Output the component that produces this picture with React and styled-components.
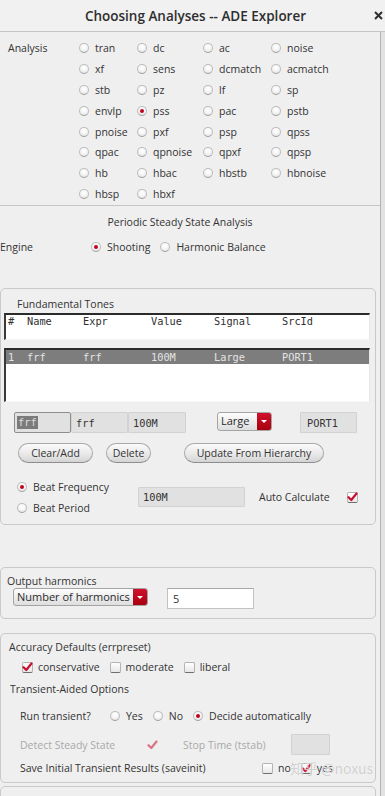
import React from 'react';
import styled, { createGlobalStyle } from 'styled-components';

const GlobalStyle = createGlobalStyle`
  html, body {
    margin: 0;
    padding: 0;
    background: #efefef;
  }
  body {
    font-family: "Open Sans", "Noto Sans", sans-serif;
    font-size: 10.5px;
    color: #333333;
  }
`;

const analyses = [
  ['tran', 'dc', 'ac', 'noise'],
  ['xf', 'sens', 'dcmatch', 'acmatch'],
  ['stb', 'pz', 'lf', 'sp'],
  ['envlp', 'pss', 'pac', 'pstb'],
  ['pnoise', 'pxf', 'psp', 'qpss'],
  ['qpac', 'qpnoise', 'qpxf', 'qpsp'],
  ['hb', 'hbac', 'hbstb', 'hbnoise'],
  ['hbsp', 'hbxf'],
];

const tones = ['#', 'Name', 'Expr', 'Value', 'Signal', 'SrcId'];
const toneRow = ['1', 'frf', 'frf', '100M', 'Large', 'PORT1'];

const Radio = ({ on, dim, children }) => (
  <Option $dim={dim}>
    <RadioCircle $on={on} />
    {children}
  </Option>
);

const Check = ({ on, dim, children }) => (
  <Option $dim={dim} $gap={5}>
    <CheckBox $dim={dim}>
      {on && (
        <svg width="11" height="10" viewBox="0 0 11 10">
          <path d="M1.5 5.2 L4.3 8 L9.5 1.5" fill="none" stroke="#c8102e" strokeWidth="2.2" strokeLinecap="round" strokeLinejoin="round" />
        </svg>
      )}
    </CheckBox>
    {children}
  </Option>
);

const Combo = ({ width, children }) => (
  <ComboBox $width={width}>
    <ComboText>{children}</ComboText>
    <ComboArrow />
  </ComboBox>
);

const App = () => {
  return (
    <Page>
      <GlobalStyle />
      <TitleBar>
        <span />
        <Title>Choosing Analyses -- ADE Explorer</Title>
        <Close>
          <svg width="9" height="9" viewBox="0 0 9 9">
            <path d="M1 1 L8 8 M8 1 L1 8" stroke="#2f2f2f" strokeWidth="2" />
          </svg>
        </Close>
      </TitleBar>

      <Frame>
        <Content>
          <AnalysisGrid>
            {analyses.map((row, r) => (
              <React.Fragment key={r}>
                <SideLabel>{r === 0 ? 'Analysis' : ''}</SideLabel>
                {row.map((name) => (
                  <Radio key={name} on={name === 'pss'}>{name}</Radio>
                ))}
                {row.length < 4 && <span style={{ gridColumn: 'span ' + (4 - row.length) }} />}
              </React.Fragment>
            ))}
          </AnalysisGrid>

          <Rule />

          <SubTitle>Periodic Steady State Analysis</SubTitle>
          <EngineRow>
            <span>Engine</span>
            <Options>
              <Radio on>Shooting</Radio>
              <Radio>Harmonic Balance</Radio>
            </Options>
          </EngineRow>

          <GroupBox $top={32}>
            <BoxTitle $left={16} $top={8}>Fundamental Tones</BoxTitle>
            <SunkenTable $height={27} $top={2}>
              <TableRow>
                {tones.map((t) => <span key={t}>{t}</span>)}
              </TableRow>
            </SunkenTable>
            <SunkenTable $height={54} $top={8}>
              <TableRow $selected>
                {toneRow.map((t, i) => <span key={i}>{t}</span>)}
              </TableRow>
            </SunkenTable>

            <FieldRow>
              <Field $width={57} $focus><Selected>frf</Selected></Field>
              <Field $width={57}>frf</Field>
              <Field $width={58}>100M</Field>
              <ComboSlot $left={31}>
                <Combo width={55}>Large</Combo>
              </ComboSlot>
              <Field $width={57} $left={28} $pad={6}>PORT1</Field>
            </FieldRow>

            <ButtonRow>
              <Button $width={75}>Clear/Add</Button>
              <Button $width={45} $left={13}>Delete</Button>
              <Button $width={140} $left={33}>Update From Hierarchy</Button>
            </ButtonRow>

            <BeatGrid>
              <BeatRadios>
                <Radio on>Beat Frequency</Radio>
                <Radio>Beat Period</Radio>
              </BeatRadios>
              <Field $width={107} $height={20}>100M</Field>
              <AutoCalc>
                <span>Auto Calculate</span>
                <Check on />
              </AutoCalc>
            </BeatGrid>
          </GroupBox>

          <GroupBox $top={42}>
            <BoxTitle $left={6} $top={7} $line={13}>Output harmonics</BoxTitle>
            <HarmonicsRow>
              <Combo width={135}>Number of harmonics</Combo>
              <WhiteField>5</WhiteField>
            </HarmonicsRow>
          </GroupBox>

          <GroupBox $top={14} $height={150}>
            <BoxTitle $left={8} $top={6}>Accuracy Defaults (errpreset)</BoxTitle>
            <PresetRow>
              <Check on>conservative</Check>
              <Check>moderate</Check>
              <Check>liberal</Check>
            </PresetRow>
            <BoxTitle $left={9} $top={6}>Transient-Aided Options</BoxTitle>
            <OptionGrid $top={11} $height={18}>
              <span>Run transient?</span>
              <Options>
                <Radio>Yes</Radio>
                <Radio>No</Radio>
                <Radio on>Decide automatically</Radio>
              </Options>
            </OptionGrid>
            <SteadyRow>
              <Dim>Detect Steady State</Dim>
              <Check on dim />
              <Dim>Stop Time (tstab)</Dim>
              <Field $width={39} $height={21} />
            </SteadyRow>
            <SaveRow>
              <span>Save Initial Transient Results (saveinit)</span>
              <Options>
                <Check>no</Check>
                <Check on>yes</Check>
              </Options>
              <Watermark>知乎 @noxus</Watermark>
            </SaveRow>
          </GroupBox>

          <GroupBox $top={3} $height={40} />
        </Content>
        <ScrollEdge />
      </Frame>
    </Page>
  );
};

export default App;

const Page = styled.div`
  width: 385px;
  height: 796px;
  overflow: hidden;
  background: #efefef;
`;

const TitleBar = styled.div`
  height: 31px;
  display: grid;
  grid-template-columns: 1fr auto 1fr;
  align-items: center;
  background: #f1f1f1;
  border-bottom: 1px solid #c4c4c4;
`;

const Title = styled.div`
  font-size: 13.5px;
  font-weight: 600;
  color: #2e2e2e;
  margin-left: 6px;
`;

const Close = styled.div`
  justify-self: end;
  display: flex;
  padding-right: 2px;
`;

const Frame = styled.div`
  display: flex;
`;

const Content = styled.div`
  width: 380px;
  border-right: 1px solid #b4b4b4;
`;

const ScrollEdge = styled.div`
  flex: 1;
  background: #e2e2e2;
`;

const AnalysisGrid = styled.div`
  display: grid;
  grid-template-columns: 79px 58px 66px 68px 1fr;
  grid-auto-rows: 20.8px;
  align-items: center;
  margin-top: 6px;
`;

const SideLabel = styled.span`
  padding-left: 8px;
`;

const Option = styled.span`
  display: inline-flex;
  align-items: center;
  gap: ${(p) => p.$gap || 6}px;
  white-space: nowrap;
  color: ${(p) => (p.$dim ? '#a9a9a9' : 'inherit')};
`;

const RadioCircle = styled.span`
  box-sizing: border-box;
  width: 10px;
  height: 10px;
  border-radius: 50%;
  border: 1px solid #bdbdbd;
  border-bottom-color: #9c9c9c;
  background: radial-gradient(circle at 50% 35%, #ffffff 0%, #f6f6f6 45%, #d9d9d9 100%);
  display: inline-flex;
  align-items: center;
  justify-content: center;
  flex-shrink: 0;
  &::after {
    content: '';
    width: 4px;
    height: 4px;
    border-radius: 50%;
    background: #c4001c;
    display: ${(p) => (p.$on ? 'block' : 'none')};
  }
`;

const CheckBox = styled.span`
  box-sizing: border-box;
  width: 11px;
  height: 11px;
  border: 1px solid ${(p) => (p.$dim ? 'transparent' : '#b3b3b3')};
  border-bottom-color: ${(p) => (p.$dim ? 'transparent' : '#6e6e6e')};
  border-radius: 2px;
  background: ${(p) => (p.$dim ? 'transparent' : 'linear-gradient(#ffffff, #e7e7e7)')};
  display: inline-flex;
  align-items: center;
  justify-content: center;
  flex-shrink: 0;
  opacity: ${(p) => (p.$dim ? 0.55 : 1)};
  & svg {
    flex-shrink: 0;
  }
`;

const Rule = styled.div`
  height: 1px;
  background: #c6c6c6;
  margin-top: 1px;
`;

const SubTitle = styled.div`
  width: 360px;
  text-align: center;
  line-height: 16px;
  margin-top: 8px;
`;

const EngineRow = styled.div`
  display: grid;
  grid-template-columns: 91px auto;
  align-items: center;
  height: 18px;
  margin-top: 8px;
`;

const Options = styled.div`
  display: flex;
  align-items: center;
  gap: 10px;
`;

const GroupBox = styled.div`
  box-sizing: border-box;
  width: 376px;
  margin-top: ${(p) => p.$top}px;
  height: ${(p) => (p.$height ? p.$height + 'px' : 'auto')};
  border: 1px solid #c9c9c9;
  border-radius: 5px;
  position: relative;
`;

const BoxTitle = styled.div`
  padding-left: ${(p) => p.$left}px;
  margin-top: ${(p) => p.$top}px;
  line-height: ${(p) => p.$line || 14}px;
`;

const SunkenTable = styled.div`
  box-sizing: border-box;
  width: 366px;
  height: ${(p) => p.$height}px;
  margin: ${(p) => p.$top}px 0 0 3px;
  background: #ffffff;
  border-top: 2px solid #2b2b2b;
  border-left: 2px solid #3a3a3a;
  border-right: 1px solid #e6e6e6;
  border-bottom: 1px solid #f6f6f6;
`;

const TableRow = styled.div`
  display: grid;
  grid-template-columns: 19px 56px 68px 63px 68px 1fr;
  padding-left: 2px;
  height: 14px;
  line-height: 14px;
  font-family: "DejaVu Sans Mono", "Liberation Mono", monospace;
  font-size: 10.3px;
  color: ${(p) => (p.$selected ? '#e4e4e4' : '#2f2f2f')};
  background: ${(p) => (p.$selected ? '#7d7d7d' : 'transparent')};
  margin-top: ${(p) => (p.$selected ? 0 : -1)}px;
`;

const FieldRow = styled.div`
  display: flex;
  align-items: flex-start;
  padding-left: 13px;
  margin-top: 10px;
`;

const Field = styled.div`
  box-sizing: border-box;
  width: ${(p) => p.$width}px;
  height: ${(p) => p.$height || 21}px;
  margin-left: ${(p) => p.$left || 0}px;
  padding-left: ${(p) => p.$pad || 4}px;
  display: flex;
  align-items: center;
  background: #e1e1e1;
  border: 1px solid ${(p) => (p.$focus ? '#8e8e8e' : '#d2d2d2')};
  border-radius: ${(p) => (p.$focus ? 2 : 1)}px;
  font-family: "DejaVu Sans Mono", "Liberation Mono", monospace;
  font-size: 10.3px;
  color: #333333;
`;

const Selected = styled.span`
  background: #7b7b7b;
  color: #dedede;
  padding: 0 1px;
  line-height: 13px;
  margin-left: -2px;
`;

const ComboSlot = styled.div`
  margin-left: ${(p) => p.$left}px;
`;

const ComboBox = styled.div`
  box-sizing: border-box;
  width: ${(p) => p.$width}px;
  height: 19px;
  display: flex;
  border: 1px solid #a4a4a4;
  border-radius: 3px;
  overflow: hidden;
  background: linear-gradient(#fdfdfd, #dedede);
`;

const ComboText = styled.span`
  flex: 1;
  padding-left: 3px;
  line-height: 15px;
  color: #2a2a2a;
  font-size: 11px;
`;

const ComboArrow = styled.span`
  width: 14px;
  background: linear-gradient(#d0102a, #a8000f);
  display: flex;
  align-items: center;
  justify-content: center;
  &::after {
    content: '';
    border-left: 3px solid transparent;
    border-right: 3px solid transparent;
    border-top: 3px solid #ffffff;
  }
`;

const ButtonRow = styled.div`
  display: flex;
  padding-left: 17px;
  margin-top: 10px;
`;

const Button = styled.div`
  box-sizing: border-box;
  width: ${(p) => p.$width}px;
  height: 20px;
  margin-left: ${(p) => p.$left || 0}px;
  display: flex;
  align-items: center;
  justify-content: center;
  border: 1px solid #a9a9a9;
  border-bottom-color: #8d8d8d;
  border-radius: 10px;
  background: linear-gradient(#fbfbfb, #e9e9e9 55%, #d4d4d4);
  color: #333333;
`;

const BeatGrid = styled.div`
  display: grid;
  grid-template-columns: 121px 107px 1fr;
  align-items: center;
  padding-left: 16px;
  margin-top: 13px;
  padding-bottom: 6px;
`;

const BeatRadios = styled.div`
  display: grid;
  grid-auto-rows: 21px;
  align-items: center;
`;

const AutoCalc = styled.div`
  display: flex;
  align-items: center;
  justify-content: space-between;
  padding: 0 17px 0 14px;
`;

const HarmonicsRow = styled.div`
  display: flex;
  align-items: flex-start;
  gap: 19px;
  padding: 0 0 9px 12px;
  & > div:first-child {
    height: 18px;
  }
`;

const WhiteField = styled.div`
  box-sizing: border-box;
  width: 87px;
  height: 21px;
  padding-left: 5px;
  display: flex;
  align-items: center;
  background: #ffffff;
  border: 1px solid #c2c2c2;
  border-top-color: #a8a8a8;
  font-size: 11px;
`;

const PresetRow = styled.div`
  display: flex;
  align-items: center;
  gap: 10px;
  height: 18px;
  margin-top: 4px;
  padding-left: 21px;
`;

const OptionGrid = styled.div`
  display: grid;
  grid-template-columns: 90px auto;
  align-items: center;
  height: ${(p) => p.$height}px;
  margin-top: ${(p) => p.$top}px;
  padding-left: 19px;
`;

const SteadyRow = styled.div`
  display: grid;
  grid-template-columns: 127px 36px 108px auto;
  align-items: center;
  margin-top: 9px;
  padding-left: 19px;
`;

const Dim = styled.span`
  color: #a9a9a9;
`;

const SaveRow = styled.div`
  display: grid;
  grid-template-columns: 242px auto;
  align-items: center;
  height: 16px;
  margin-top: 5px;
  padding-left: 19px;
  position: relative;
`;

const Watermark = styled.span`
  position: absolute;
  left: 289px;
  top: -2px;
  font-family: "Noto Sans CJK SC", "Noto Sans", sans-serif;
  font-size: 14px;
  color: rgba(200, 200, 200, 0.85);
  text-shadow: 0 0 1px #ffffff;
  white-space: nowrap;
  pointer-events: none;
`;
